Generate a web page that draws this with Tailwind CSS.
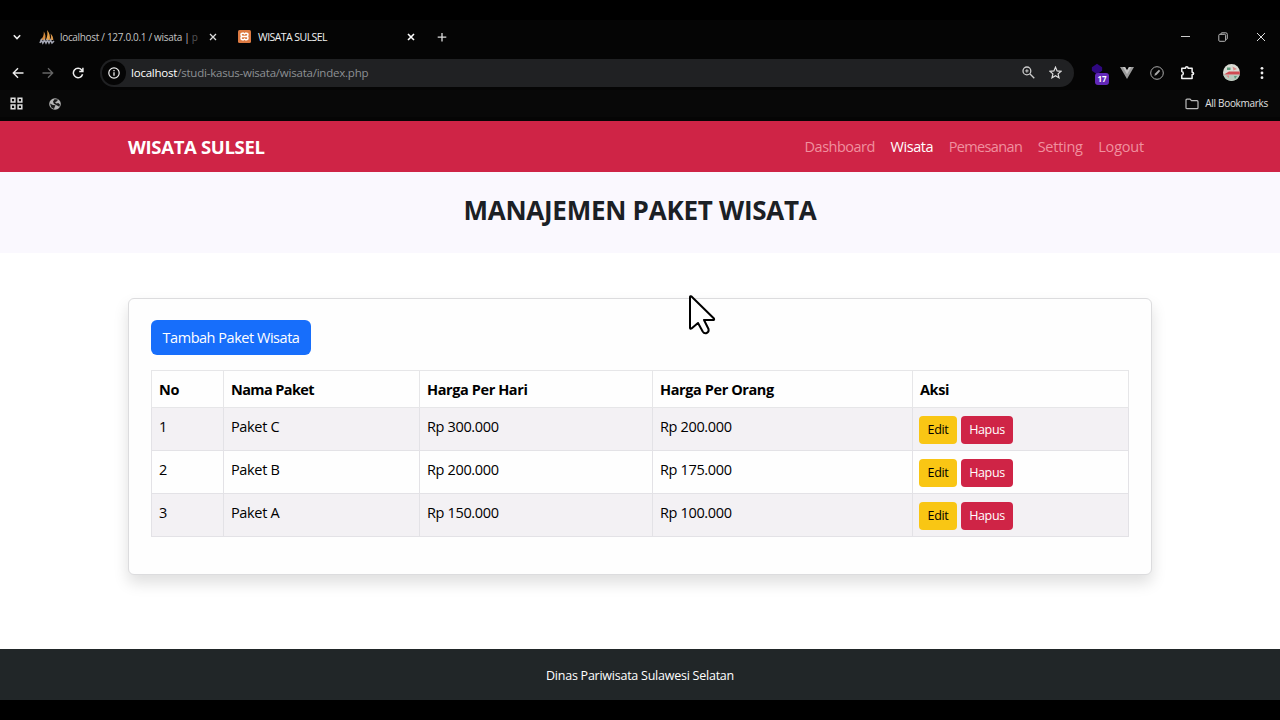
<!DOCTYPE html>
<html lang="id">
<head>
  <meta charset="UTF-8">
  <meta name="viewport" content="width=device-width, initial-scale=1.0">
  <title>WISATA SULSEL</title>
  <script src="https://cdn.jsdelivr.net/npm/@tailwindcss/browser@4"></script>
</head>
<body class="w-[1280px] h-[720px] overflow-hidden bg-black pt-5 font-['Open_Sans','Noto_Sans',sans-serif]">

  <!-- Browser -->
  <div class="h-[101px] flex flex-col bg-[#050505] text-white">
    <!-- Tab -->
    <div class="h-[35px] pb-[2px] flex items-center">
      <svg class="ml-[11px] w-3 h-3 shrink-0" viewBox="0 0 12 12" fill="none" stroke="#eee" stroke-width="1.6"><path d="M2.8 4.3 6 7.500l3.200-3.200"/></svg>
      <svg class="ml-[16px] mt-px w-[16px] h-[16px] shrink-0" viewBox="0 0 16 16">
        <path d="M1.500 11C4 9 5 6 4.800 2.500 6.500 5 7 8 6 11z" fill="#d58a3c"/>
        <path d="M6.800 11C8.500 8 8.800 4 8 1c2.600 3 3.400 6.500 2.800 10z" fill="#e8a34a"/>
        <path d="M11.300 11c.9-2.500.8-4.500.2-6.500 2 2 2.800 4 2.800 6.500z" fill="#d9964a"/>
        <path d="M1 14 2.300 11l1.500 3L5.500 11l1.500 3L8.500 11l1.500 3 1.500-3 1.500 3 2-2" fill="none" stroke="#a3a5b2" stroke-width="1.600"/>
      </svg>
      <div class="ml-[5px] w-[140px] text-[10px] tracking-[-0.32px] leading-4 text-[#c4c4c4] whitespace-nowrap">localhost / 127.0.0.1 / wisata | <span class="text-[#555]">p</span></div>
      <svg class="ml-[8px] w-[10px] h-[10px] shrink-0" viewBox="0 0 10 10" stroke="#ddd" stroke-width="1.300"><path d="m2 2 6 6M8 2 2 8"/></svg>
      <svg class="ml-[20px] w-[13px] h-[13px] shrink-0" viewBox="0 0 13 13">
        <rect width="13" height="13" rx="1.500" fill="#dd7a42"/>
        <path d="M6 3.200H4.300Q3 3.200 3 4.500T4.300 6.500Q3 6.500 3 8t1.300 1.800H6M7 3.200h1.700Q10 3.200 10 4.500T8.700 6.500Q10 6.500 10 8t-1.300 1.800H7M4.300 6.500h4.400M6 3.200 7 4.500M6 9.800 7 8.500" fill="none" stroke="#fff" stroke-width="1.500"/>
      </svg>
      <div class="ml-[7px] w-[140px] text-[10.500px] tracking-[-0.55px] leading-4 text-[#f1f1f1] whitespace-nowrap">WISATA SULSEL</div>
      <svg class="ml-[8px] w-[10px] h-[10px] shrink-0" viewBox="0 0 10 10" stroke="#fff" stroke-width="1.600"><path d="m2 2 6 6M8 2 2 8"/></svg>
      <svg class="ml-[20px] w-[12px] h-[12px] shrink-0" viewBox="0 0 12 12" stroke="#ddd" stroke-width="1.300"><path d="M6 2v8.500M1.700 6.200h8.600"/></svg>
      <div class="ml-auto mr-[14px] flex items-center gap-[27px]">
        <svg class="mb-px w-[11px] h-[11px]" viewBox="0 0 11 11" stroke="#ccc"><path d="M1 5.500h9"/></svg>
        <svg class="mr-px w-[10px] h-[10px]" viewBox="0 0 10 10" fill="none" stroke="#ccc" stroke-width=".9"><rect x=".8" y="2.300" width="6.800" height="7" rx="1"/><path d="M3 2.300V1.600Q3 .8 3.800.8h4q1.500 0 1.500 1.500v4.200q0 .8-.8.800H7.800"/></svg>
        <svg class="w-[10px] h-[10px]" viewBox="0 0 10 10" stroke="#ddd"><path d="m1 1 8 8M9 1 1 9"/></svg>
      </div>
    </div>

    <!-- Toolbar -->
    <div class="h-[35px] flex items-center">
      <svg class="ml-3 w-3 h-3 shrink-0" viewBox="0 0 12 12" fill="none" stroke="#eee" stroke-width="1.400"><path d="M11.500 6H1.500M6 1.300 1.300 6 6 10.700"/></svg>
      <svg class="ml-[18px] w-3 h-3 shrink-0" viewBox="0 0 12 12" fill="none" stroke="#666" stroke-width="1.300"><path d="M.5 6h10M6 1.300 10.700 6 6 10.700"/></svg>
      <svg class="ml-[18px] w-3 h-3 shrink-0" viewBox="0 0 12 12" fill="none" stroke="#eee" stroke-width="1.500"><path d="M10.600 7.300A4.700 4.700 0 1 1 9.700 3l1 1.200M10.900.8v3.700H7.200"/></svg>
      <div class="ml-[16px] w-[974px] h-[28px] shrink-0 rounded-full bg-[#202123] flex items-center">
        <div class="ml-[2px] w-[24px] h-[24px] rounded-full bg-[#050505] flex items-center justify-center">
          <svg class="w-[12px] h-[12px]" viewBox="0 0 12 12" fill="none" stroke="#eee" stroke-width="1.200"><circle cx="6" cy="6" r="5.200"/><path d="M6 5.200v3.500M6 3v1.300" stroke-width="1.300"/></svg>
        </div>
        <div class="ml-[5px] pt-px text-[11.500px] tracking-[-0.22px] leading-4 text-[#8d9093] whitespace-nowrap"><span class="text-white">localhost</span>/studi-kasus-wisata/wisata/index.php</div>
        <svg class="ml-auto w-[13px] h-[13px]" viewBox="0 0 13 13" fill="none" stroke="#ccc" stroke-width="1.300"><circle cx="4.900" cy="4.900" r="3.900"/><path d="m7.800 7.800 4.500 4.500"/><path d="M4.900 3.200v3.400M3.200 4.900h3.400" stroke-width="1"/></svg>
        <svg class="ml-[14px] mr-[12px] w-[13px] h-[13px]" viewBox="0 0 13 13" fill="none" stroke="#ddd" stroke-width="1.200"><path d="m6.500 1.200 1.600 3.700 4 .4-3 2.600.9 3.900-3.500-2.100L3 11.800l.9-3.900-3-2.600 4-.4z"/></svg>
      </div>
      <div class="relative ml-[17px] w-[18px] h-[20px] shrink-0">
        <svg class="mt-[-1px] w-[12px] h-[14px]" viewBox="0 0 14 14"><path d="m7 1 6 4v4l-6 4-6-4V5z" fill="#2f0880"/></svg>
        <div class="absolute left-[4px] top-[10px] w-[14px] h-[12px] rounded-[3px] bg-[#6228b8] text-[8px] leading-[12px] font-bold text-center">17</div>
      </div>
      <svg class="ml-[11px] w-[14px] h-[12px] shrink-0" viewBox="0 0 14 12"><path d="M0 0h5l2 3.500L9 0h5L7 12z" fill="#9a9a9a"/><path d="M2.800 0H5l2 3.500L9 0h2.200L7 7.300z" fill="#c4c4c4"/></svg>
      <svg class="ml-[16px] w-[14px] h-[14px] shrink-0" viewBox="0 0 14 14" fill="none" stroke="#aaa"><circle cx="7" cy="7" r="6.300"/><path d="m4.300 9.700.8-2.200L8.900 3.800l1.300 1.300-3.700 3.800z" fill="#aaa" stroke="none"/></svg>
      <svg class="ml-[16px] w-[15px] h-[15px] shrink-0" viewBox="0 0 15 15" fill="none" stroke="#f3f3f3" stroke-width="1.500"><path d="M1.800 3.200h3.700q0-1.500 1.300-1.500t1.300 1.500h4v4q1.500 0 1.500 1.200t-1.500 1.200v4H1.800v-3.400q1.500-.2 1.500-1.800T1.800 6.600z" stroke-linejoin="round"/></svg>
      <svg class="ml-[28px] w-[17px] h-[17px] shrink-0" viewBox="0 0 17 17">
        <circle cx="8.500" cy="8.500" r="8.500" fill="#d9dcd4"/>
        <path d="M.3 10.500h16.400A8.500 8.500 0 0 1 .3 10.500z" fill="#b9c9bd"/>
        <path d="M6 7.500h10.800v3H1z" fill="#cf4a52"/>
        <path d="M4 3.500h3.500V6H4zM11 12h3l-2 3z" fill="#5f9a7c"/>
        <path d="M9.500 2.500 14 5l-3.500 1.500zM3 11.500h3V14z" fill="#d98a8a"/>
      </svg>
      <svg class="ml-[20px] w-[4px] h-[14px] shrink-0" viewBox="0 0 4 14" fill="#eee"><circle cx="2" cy="2.300" r="1.400"/><circle cx="2" cy="7" r="1.400"/><circle cx="2" cy="11.700" r="1.400"/></svg>
    </div>

    <!-- Bookmark -->
    <div class="h-[27px] flex items-center bg-[#080808]">
      <svg class="ml-[10px] w-[13px] h-[13px]" viewBox="0 0 13 13" fill="none" stroke="#ddd" stroke-width="1.500"><path d="M1.200 1.200h3.700v3.700H1.200zM8.100 1.200h3.700v3.700H8.100zM1.200 8.100h3.700v3.700H1.200zM8.100 8.100h3.700v3.700H8.100z"/></svg>
      <svg class="ml-[26px] w-[12px] h-[12px]" viewBox="0 0 12 12"><circle cx="6" cy="6" r="5.800" fill="#b5b5b5"/><path d="M1 5.500 4 7l2.500.3-.8 1.700L5 11 2.300 9.500zM5.500 1.200 9 1.500 8 3.200 6 4.200l1.500 1.300 1.800-.4 1.700 1.400-.6 2.300L8 7.500 4.800 5.800 4 3.500z" fill="#1a1a1a"/></svg>
      <svg class="ml-auto w-[14px] h-[12px]" viewBox="0 0 14 12" fill="none" stroke="#bbb" stroke-width="1.200"><path d="M1 2.200q0-1 1-1h3l1.500 1.500H12q1 0 1 1v6q0 1-1 1H2q-1 0-1-1z"/></svg>
      <span class="ml-[6px] mr-[12px] pb-px text-[10px] tracking-[-0.3px] leading-4 text-[#e0e0e0]">All Bookmarks</span>
    </div>
  </div>

  <!-- Navbar -->
  <nav class="h-[51px] bg-[#cf2446] px-[128px] flex items-center justify-between">
    <a class="pt-px text-[18.500px] font-bold tracking-[-0.33px] text-white">WISATA SULSEL</a>
    <ul class="mr-[8px] flex gap-[15.500px] text-[14.500px] tracking-[-0.5px] text-[#f0909f]">
      <li>Dashboard</li>
      <li class="text-white tracking-[-0.4px]">Wisata</li>
      <li class="tracking-[-0.65px]">Pemesanan</li>
      <li class="tracking-[-0.25px]">Setting</li>
      <li class="tracking-[-0.2px]">Logout</li>
    </ul>
  </nav>

  <header class="h-[81px] bg-[#faf8fe] text-center">
    <h1 class="pt-[19px] text-[26px] leading-[38px] font-bold tracking-[-0.25px] text-[#1b2025]">MANAJEMEN PAKET WISATA</h1>
  </header>

  <main class="h-[396px] bg-white pt-[45px] px-[128px]">
    <div class="relative h-[277px] rounded-md border border-[#dcdcde] bg-[#fefefe] shadow-[0_8px_15px_rgba(0,0,0,0.13)] px-[22px] pt-[21px]">
      <button class="block h-[35px] w-[160px] rounded-md bg-[#176efb] text-white text-[14.500px] tracking-[-0.47px] whitespace-nowrap">Tambah Paket Wisata</button>

      <table class="mt-[15px] w-[977px] table-fixed border-collapse text-[14.500px] leading-[22px] text-black [&_td]:border [&_th]:border [&_td]:border-[#e3e2e6] [&_th]:border-[#e6e6e8] [&_td]:px-[7px] [&_th]:px-[7px] [&_td]:align-top [&_td]:pt-[8px] [&_th]:pt-[2px] [&_th]:text-left [&_th]:tracking-[-0.4px] [&_td]:tracking-[-0.35px]">
        <colgroup>
          <col class="w-[72px]"><col class="w-[196px]"><col class="w-[233px]"><col class="w-[260px]"><col class="w-[216px]">
        </colgroup>
        <thead>
          <tr class="h-[37px]"><th>No</th><th><span class="tracking-[-0.6px]">Nama Paket</span></th><th>Harga Per Hari</th><th>Harga Per Orang</th><th>Aksi</th></tr>
        </thead>
        <tbody>
          <tr class="h-[43px] bg-[#f3f1f4]">
            <td>1</td><td>Paket C</td><td>Rp 300.000</td><td>Rp 200.000</td>
            <td><div class="-ml-px flex gap-[4px] text-[12.500px] leading-[28px] text-center"><a class="w-[38px] h-[28px] rounded bg-[#f9c614]">Edit</a><a class="w-[52px] h-[28px] rounded bg-[#cf2446] text-white">Hapus</a></div></td>
          </tr>
          <tr class="h-[43px]">
            <td>2</td><td>Paket B</td><td>Rp 200.000</td><td>Rp 175.000</td>
            <td><div class="-ml-px flex gap-[4px] text-[12.500px] leading-[28px] text-center"><a class="w-[38px] h-[28px] rounded bg-[#f9c614]">Edit</a><a class="w-[52px] h-[28px] rounded bg-[#cf2446] text-white">Hapus</a></div></td>
          </tr>
          <tr class="h-[43px] bg-[#f3f1f4]">
            <td>3</td><td>Paket A</td><td>Rp 150.000</td><td>Rp 100.000</td>
            <td><div class="-ml-px flex gap-[4px] text-[12.500px] leading-[28px] text-center"><a class="w-[38px] h-[28px] rounded bg-[#f9c614]">Edit</a><a class="w-[52px] h-[28px] rounded bg-[#cf2446] text-white">Hapus</a></div></td>
          </tr>
        </tbody>
      </table>

      <!-- Kursor -->
      <svg class="absolute left-[559px] top-[-5px] w-[29px] h-[43px]" viewBox="0 0 29 43" fill="#fff" stroke="#000" stroke-width="2" stroke-linejoin="round"><path d="M2 3v31q.3 1.200 1.500.5L10 29l4.700 8.500q1.500 2.500 4 1.500t1.800-4L16 26h9.500q1.200-.5.200-1.800L3.500 2.500Q2.200 1.800 2 3z"/></svg>
    </div>
  </main>

  <footer class="h-[51px] bg-[#212628] text-white text-center text-[12.500px] tracking-[-0.24px] leading-[53px]">Dinas Pariwisata Sulawesi Selatan</footer>

</body>
</html>
